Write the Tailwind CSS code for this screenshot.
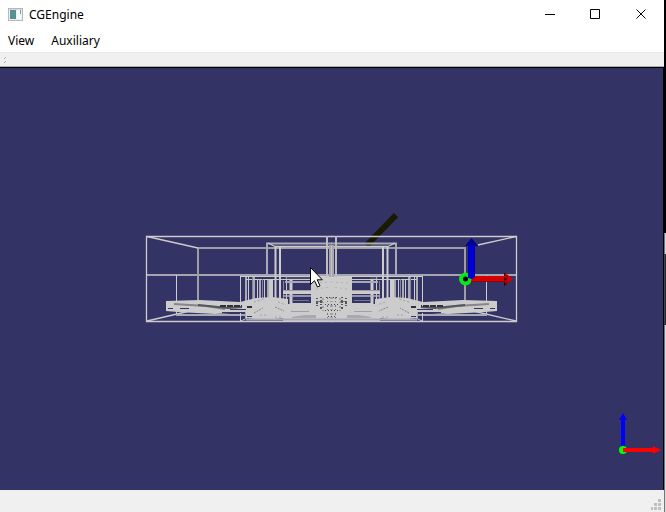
<!DOCTYPE html>
<html lang="en">
<head>
    <meta charset="UTF-8"/>
    <meta name="viewport" content="width=device-width, initial-scale=1.0"/>
    <title>CGEngine</title>
    <script src="https://cdn.jsdelivr.net/npm/@tailwindcss/browser@4"></script>
</head>
<body class="bg-[#333366] font-['Noto_Sans',sans-serif] text-xs text-black">
<div class="flex h-screen">
    <!-- Application window -->
    <div class="flex min-w-0 flex-1 flex-col">
        <header class="flex h-[30px] shrink-0 items-center bg-white pl-2">
            <svg class="mr-1.5 mb-0.5 h-[13px] w-[15px]" viewBox="0 0 15 13" aria-hidden="true">
                <rect x="0.5" y="0.5" width="14" height="12" fill="#eef0f2" stroke="#b4b6c2"/>
                <rect x="1" y="1" width="13" height="1" fill="#d4d8e0"/>
                <rect x="2" y="2" width="6" height="9" fill="#6387a0"/>
                <rect x="3" y="3" width="4" height="7" fill="#4c9a80"/>
                <rect x="9" y="2" width="4" height="9" fill="#f8fafa"/>
                <path d="M12 2h1v4h-1z" fill="#6fa896"/>
            </svg>
            <h1>CGEngine</h1>
            <div class="ml-auto flex h-full pb-0.5">
                <button class="flex w-[46px] items-center justify-center" aria-label="Minimize">
                    <svg class="size-[11px]" viewBox="0 0 11 11"><path d="M0 5.5h10" stroke="#000"/></svg>
                </button>
                <button class="flex w-[45px] items-center justify-center" aria-label="Maximize">
                    <svg class="size-[11px]" viewBox="0 0 11 11"><path d="M0.5 0.5h9v9h-9z" fill="none" stroke="#000"/></svg>
                </button>
                <button class="flex w-[46px] items-center justify-center" aria-label="Close">
                    <svg class="size-[11px]" viewBox="0 0 11 11"><path d="M0.5 0.5l9 9M9.5 0.5l-9 9" stroke="#000"/></svg>
                </button>
            </div>
        </header>

        <nav class="flex h-[22px] shrink-0 items-center gap-[17px] bg-white px-2">
            <button>View</button>
            <button>Auxiliary</button>
        </nav>

        <!-- Empty toolbar with its drag handle -->
        <div class="flex h-[15px] shrink-0 items-center border-t border-b border-t-[#eaeaea] border-b-[#b0b0b0] bg-[#f0f0f0] pl-1">
            <svg class="h-2 w-1" viewBox="0 0 4 8" aria-hidden="true">
                <path d="M0 2h1v1H0zM0 6h1v1H0z" fill="#a8a8a8"/>
                <path d="M1 1h1v1H1zM1 5h1v1H1z" fill="#b4b4b4"/>
            </svg>
        </div>

        <!-- 3D viewport -->
        <main class="relative min-h-0 flex-1 border-t border-r border-black bg-[#333366]">
            <svg class="block h-full w-full" viewBox="0 68 663 422" role="img" aria-label="Wireframe model">
                <path d="M366.500 245.500L396 215" stroke="#1a1a00" stroke-width="6"/>
                <defs>
                    <g id="half" fill="none" stroke="#cccccc">
                        <!-- outer box -->
                        <path d="M332 236.5H146.5V321.5H332" stroke-width="1.3"/>
                        <path d="M146 275H332" stroke-width="1.6"/>
                        <path d="M147 321L190 311" stroke-width="1.3"/>
                        <path d="M198 248H332M198 247V302" stroke="#9d9da8" stroke-width="2"/>
                        <path d="M176.5 275V315"/>
                        <path d="M176 315H246" stroke="#a9a9b3" stroke-width="2"/>
                        <path d="M240.5 276V321M241 321L247 318"/>
                        <!-- cabin box -->
                        <path d="M332 243.5H267V275" stroke="#a9a9b3" stroke-width="2"/>
                        <path d="M268 243L276 247M275 246.5H332" stroke-width="1.3"/>
                        <path d="M275.5 247V298M280 247V298" stroke-width="2"/>
                        <!-- side ribs -->
                        <path d="M246 277V318M254 277V302M260 279V302M268 279V299" stroke="#a9a9b3" stroke-width="2"/>
                        <path d="M241 276.5H332M248.5 277V318M257.5 279V302M264.5 279V302M286.5 277V300M246 279.5H332"/>
                        <path d="M252.5 277V302M262.5 279V302M283.5 281V300" stroke="#85859a"/>
                        <path d="M271 279V300" stroke-width="4"/>
                        <path d="M291 280V318" stroke-width="3"/>
                        <path d="M285 282H311" stroke="#a9a9b3" stroke-width="2"/>
                        <path d="M283 292.500H311" stroke-width="3"/>
                        <path d="M283 296H311" stroke="#b4b4bc" stroke-width="1.5"/>
                        <path d="M283 290.500H311" stroke="#a397a8"/>
                        <path d="M293 300.500H309" stroke="#77778c"/>
                        <path d="M292 303.500H311"/>
                        <path d="M285 278H311" stroke="#60607c"/>
                        <!-- wing and body -->
                        <path d="M166 301L200 300L240 302L256 298L272 297L288 299V318L262 320L246 318V312L215 314L178 312L166 311Z" fill="#cccccc" stroke="none"/>
                        <path d="M283 304H332V321H283Z" fill="#cccccc" stroke="none"/>
                        <path d="M311 277H332V321H311Z" fill="#cccccc" stroke="none"/>
                        <path d="M246 319.500H332" stroke="#a9a9b3" stroke-width="2"/>
                        <path d="M292 317L304 315H316V318H292Z" fill="#a9a9ae" stroke="none"/>
                        <path d="M168 308.5h5M180 308.5h9M247 316.5h5" stroke="#333366"/>
                        <path d="M222 312.5H245M230 309.5H246" stroke="#333366"/>
                        <path d="M174 304L206 306L225 309" stroke="#86868a" stroke-width="2"/>
                        <path d="M198 305L228 308L242 307" stroke="#55555e" stroke-width="2"/>
                        <path d="M220 306H242M247 307h5" stroke="#303038" stroke-width="2" stroke-dasharray="6 1"/>
                        <path d="M254 313L263 308M275 307L284 311" stroke="#888890" stroke-dasharray="2 1"/>
                        <path d="M254 302L264 299M278 302L286 305M260 315h6M275 317h8" stroke="#a3a3aa" stroke-dasharray="2 2"/>
                        <path d="M291 311.5H309" stroke="#a0a0a4"/>
                        <!-- fuselage rivets -->
                        <path d="M317 298v10M321 297v12" stroke="#56565e" stroke-width="2" stroke-dasharray="1 2 3 1"/>
                        <path d="M318 301.5h6M323 298v14M327.500 297v22M331 297v22" stroke="#77777e" stroke-dasharray="2 2 1 3"/>
                        <path d="M326 297.500h6M325 304.500h7M325 310.500h7M328 316.500h4" stroke="#44444c" stroke-dasharray="1 2"/>
                        <path d="M315 283L331 282M316 289L331 287" stroke="#b3b3b3" stroke-dasharray="2 3"/>
                    </g>
                </defs>
                <use href="#half"/>
                <use href="#half" transform="translate(663 0) scale(-1 1)"/>
                <path d="M352 278H370" stroke="#333366" stroke-width="2"/>
                <path d="M147 236.5L198 248M478 245L516 236.5" stroke="#cccccc" stroke-width="1.3"/>
                <!-- mast -->
                <path d="M327 236V277M336 236V277" stroke="#bdbdc1" stroke-width="2"/>
                <path d="M329 245H334V277H329Z" fill="#aaa4ae"/>
                <path d="M331.500 246V277" stroke="#c4c0c4"/>

                <!-- object gizmo -->
                <circle cx="465.500" cy="279" r="4.500" fill="#000" stroke="#0be619" stroke-width="4"/>
                <path d="M472 276H506V282H471Z" fill="#d40000"/>
                <path d="M472 281H506V282H472Z" fill="#a00000"/>
                <path d="M504 272L513 279L504 286Z" fill="#b40000"/>
                <path d="M504.500 273V276M504.500 282V285.500L507 283" fill="none" stroke="#260000"/>
                <path d="M504 277L507 279L504 281Z" fill="#400000"/>
                <path d="M508 276L513 279L508 282Z" fill="#d80000"/>
                <path d="M468 245H475V277L472 279L468 278Z" fill="#0000d4"/>
                <path d="M474 246H475V277H474Z" fill="#0000a0"/>
                <path d="M471.500 238L478 246H465Z" fill="#00009a"/>

                <!-- pointer -->
                <path d="M310.500 267.500V284.500L314.500 280.700L317.500 287L320 285.800L317.200 279.800H322.300Z" fill="#fff" stroke="#000"/>
            </svg>
            <!-- world axes -->
            <svg class="absolute right-0 bottom-[34px] h-[46px] w-[46px]" viewBox="0 0 46 46" aria-label="World axes">
                <circle cx="6" cy="40" r="4" fill="#00ff00"/>
                <path d="M4 36V10H2L6 3L10 10H8V36Z" fill="#0000ff"/>
                <path d="M6 38H36V36L44 40L36 44V42H6Z" fill="#ff0000"/>
            </svg>
        </main>

        <footer class="flex h-[22px] shrink-0 items-end justify-end bg-[#f0f0f0] pr-[3px] pb-[2px]">
            <svg class="h-[11px] w-[10px]" viewBox="0 0 10 11" aria-hidden="true">
                <path d="M7 0h3v3H7zM7 4h3v3H7zM7 8h3v3H7zM3 4h3v3H3zM3 8h3v3H3zM0 8h2v3H0z" fill="#bfbfbf"/>
            </svg>
        </footer>
    </div>

    <!-- Sliver of the desktop behind the window -->
    <div class="flex w-0.5 shrink-0 flex-col">
        <div class="h-[233px] bg-black"></div>
        <div class="h-[21px] border-l border-[#77777a] bg-[#d8d4d8]"></div>
        <div class="h-[71px] border-l border-[#444444] bg-[#2a2a2a]"></div>
        <div class="flex-1 border-l border-[#77777a] bg-[#d8d8d8]"></div>
    </div>
</div>
</body>
</html>
